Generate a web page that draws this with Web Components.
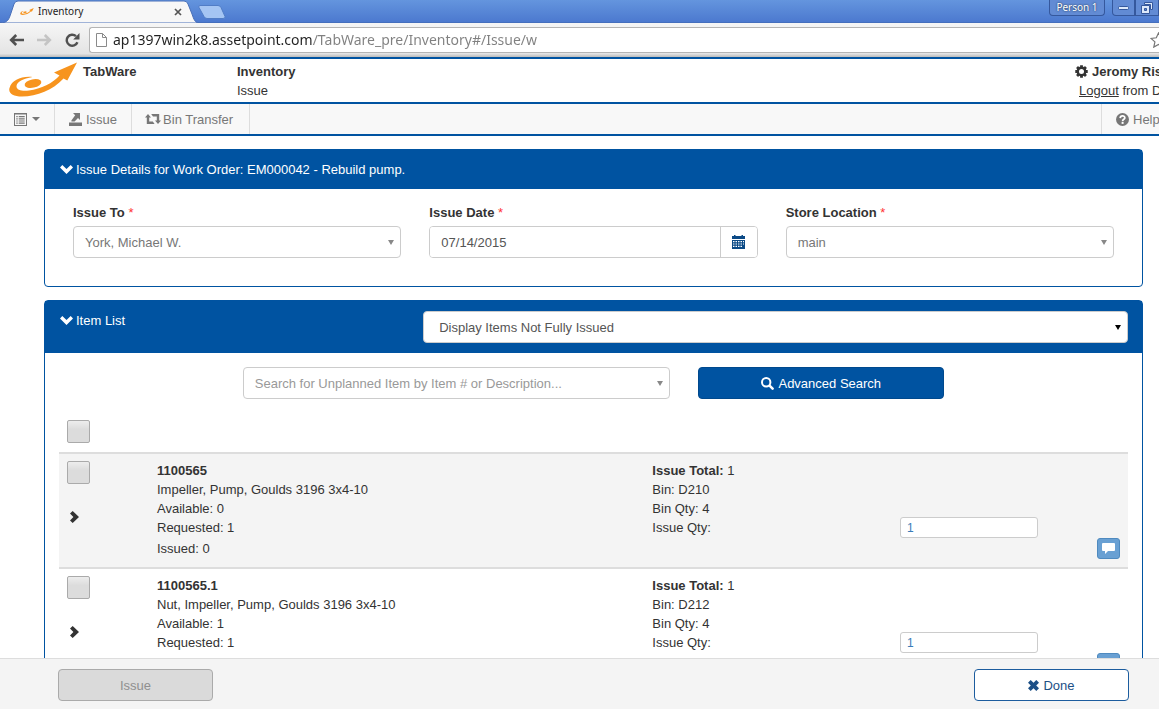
<!DOCTYPE html>
<html lang="en">
<head>
  <meta charset="UTF-8">
  <meta name="viewport" content="width=device-width, initial-scale=1.0">
  <title>Inventory</title>
  <style>
    :root {
      --c-brand: #0053a1;
      --c-border: #ccc;
      --c-text: #333;
      --c-muted: #777;
    }
    body {
      margin: 0;
      background: #fff;
      color: var(--c-text);
      font: 13px/19px "Liberation Sans", Arial, sans-serif;
    }
  </style>
</head>
<body>
  <inventory-app></inventory-app>

  <script>
    const ICONS = {
      'chevron-down': ['0 0 13 9', '<path d="M0 2.4 2.3 0 6.5 4 10.7 0 13 2.4 6.5 9z"/>'],
      'chevron-right': ['0 0 10 12', '<path d="M1 2.6 3.7 0 10 6 3.7 12 1 9.4 4.4 6z"/>'],
      list: ['0 0 13 13', '<path fill-rule="evenodd" d="M0 0h13v13H0zM1 1.500v10.500h11V1.500z"/><path d="M2.3 3h1.4v1.2H2.3zM4.7 3h6v1.2h-6zM2.3 5.2h1.4v1.2H2.3zM4.7 5.2h6v1.2h-6zM2.3 7.4h1.4v1.2H2.3zM4.7 7.4h6v1.2h-6zM2.3 9.6h1.4v1.2H2.3zM4.7 9.6h6v1.2h-6z"/>'],
      issue: ['0 0 13 13', '<path d="M0 9.6h13V13H0zM4 0h7v7L9 5 5.600 8.600H2.400V7.400L6.200 2.200z"/>'],
      transfer: ['0 0 16 10', '<path d="M3 0 6 3.6H4.200v4h3.600L9.600 10H1.8V3.6H0zM6.200 0h8v6.4H16L13 10 10 6.4h1.800v-4H8z"/>'],
      help: ['0 0 13 13', '<circle cx="6.5" cy="6.5" r="6.5"/><path fill="none" stroke="#fff" stroke-width="1.8" d="M4.2 5.1c.1-3 4.7-2.9 4.6-.2C8.8 6.4 6.6 6.3 6.6 8.2"/><path fill="#fff" d="M5.6 9h2v1.9h-2z"/>'],
      gear: ['0 0 14 14', '<circle cx="7" cy="7" r="4" fill="none" stroke="currentColor" stroke-width="2.600"/><path stroke="currentColor" stroke-width="3" d="M7 .3v2.400M7 11.3v2.400M.3 7h2.400M11.3 7h2.400M2.2 2.2 4 4M10 10l1.800 1.800M2.2 11.800 4 10M10 4l1.800-1.800"/>'],
      calendar: ['0 0 13 14', '<path d="M2 0h1.5v1h6V0H11v1h2v3H0V1h2z"/><path fill-rule="evenodd" d="M0 5h13v9H0zM1 6v1.2h1.5V6zm2.5 0v1.2H5V6zM6 6v1.2h1.5V6zm2.5 0v1.2H10V6zM11 6v1.2h1V6zM1 8.4v1.2h1.5V8.4zm2.5 0v1.2H5V8.4zm2.5 0v1.2h1.5V8.4zm2.5 0v1.2H10V8.4zm2.5 0v1.2h1V8.4zM1 10.8V12h1.5v-1.2zm2.5 0V12H5v-1.2zm2.5 0V12h1.5v-1.2zm2.5 0V12H10v-1.2z"/>'],
      search: ['0 0 13 13', '<circle cx="5.2" cy="5.2" r="4.2" fill="none" stroke="currentColor" stroke-width="2"/><path stroke="currentColor" stroke-width="2.6" stroke-linecap="round" d="m8.8 8.8 2.8 2.8"/>'],
      comment: ['0 0 13 11', '<path d="M1 0h11q1 0 1 1v6q0 1-1 1H6l-3 3V8H1Q0 8 0 7V1q0-1 1-1z"/>'],
      times: ['0 0 11 11', '<path d="M2.7 0 5.5 2.8 8.3 0 11 2.7 8.2 5.5 11 8.3 8.3 11 5.5 8.2 2.7 11 0 8.3 2.8 5.5 0 2.7z"/>'],
      close: ['0 0 8 8', '<path stroke="currentColor" stroke-width="1.7" d="m1 1 6 6M7 1 1 7"/>'],
      back: ['0 0 15 12', '<path fill="none" stroke="currentColor" stroke-width="2.6" d="M15 6H2.5M7.2 1 2.2 6l5 5"/>'],
      forward: ['0 0 15 12', '<path fill="none" stroke="currentColor" stroke-width="2.6" d="M0 6h12.5M7.8 1l5 5-5 5"/>'],
      reload: ['0 0 15 14', '<path fill="none" stroke="currentColor" stroke-width="2.4" d="M12.4 9.2A5.5 5.5 0 1 1 11 3.2"/><path d="M14.5 0v6.4H8.2z"/>'],
      page: ['0 0 11 14', '<path fill="#fff" stroke="#8a8a8a" d="M.5.5h6l4 4v9H.5zM6.5.5v4h4"/>'],
      star: ['0 0 17 16', '<path fill="#fff" stroke="#777" stroke-width="1.2" d="m8.5 1 2.2 4.8 5.3.6-3.9 3.5 1.1 5.2-4.7-2.6-4.7 2.6 1.1-5.2L1 6.4l5.3-.6z"/>'],
      logo: ['0 0 68 35', '<path fill="#f7941e" d="M68 .5 58.3 18.600 54.500 16.500C44 28 28 34.500 13 34.500 4 34.500-1 31 .5 26 3 18 12 14 23.500 15 14 16.500 8 20 7.500 24c-.3 4.500 6.500 5.500 12.500 4.500 12-1.500 24-7.500 30.500-15L45 10.600z"/><ellipse fill="#f7941e" cx="24" cy="21.500" rx="8.500" ry="4.200" transform="rotate(-12 24 21.500)"/>']
    };

    class UiIcon extends HTMLElement {
      constructor() {
        super();
        this.attachShadow({ mode: 'open' });
      }

      connectedCallback() {
        const [box, shape] = ICONS[this.getAttribute('name')];
        const [, , w, h] = box.split(' ');
        const width = this.getAttribute('width') || w;
        this.shadowRoot.innerHTML = `
          <style>
            :host { display: inline-block; flex: none; line-height: 0; }
            svg { display: block; fill: currentColor; }
          </style>
          <svg viewBox="${box}" width="${width}" height="${Math.round(h * width / w)}" aria-hidden="true">${shape}</svg>
        `;
      }
    }
    customElements.define('ui-icon', UiIcon);

    class BrowserBar extends HTMLElement {
      constructor() {
        super();
        this.attachShadow({ mode: 'open' });
      }

      connectedCallback() {
        this.shadowRoot.innerHTML = `
          <style>
            :host { display: block; overflow: hidden; font-family: "Noto Sans", sans-serif; }
            * { box-sizing: border-box; }
            button { font: inherit; color: inherit; padding: 0; margin: 0; border: 0; background: none; display: flex; align-items: center; justify-content: center; }
            .strip {
              display: flex;
              align-items: flex-start;
              height: 23px;
              background: linear-gradient(#6495de, #4c79cf);
              border-bottom: 1px solid #456fbd;
            }
            .tab { position: relative; width: 198px; height: 23px; flex: none; }
            .shape { position: absolute; left: 0; top: 0; }
            .tab-row { position: relative; display: flex; align-items: center; height: 23px; padding: 0 16px 0 20px; font-size: 10px; color: #222; }
            .tab-row span { flex: 1; padding-left: 4px; }
            .tab-row button { color: #555; }
            .new-tab { margin-top: 5px; }
            .window { display: flex; margin-left: auto; color: #fff; }
            .window button { height: 16px; border: 1px solid #35589d; border-top: 0; background: #628bd4; }
            .window .person { width: 56px; margin-right: 7px; border-radius: 0 0 4px 4px; font-size: 10px; text-shadow: 0 0 2px #123; }
            .min { width: 23px; border-radius: 0 0 0 4px; }
            .max { width: 24px; }
            .tools {
              display: flex;
              align-items: center;
              height: 34px;
              padding: 0 0 0 9px;
              background: linear-gradient(#f6f6f6, #e4e4e4 90%, #bbb);
              color: #505050;
            }
            .tools > button { width: 28px; justify-content: flex-start; }
            .tools > button:nth-child(2) { color: #c4c4c4; }
            .tools > button:nth-child(3) { width: 24px; }
            .address {
              display: flex;
              align-items: center;
              flex: 1;
              height: 26px;
              min-width: 0;
              padding: 0 0 0 6px;
              overflow: hidden;
              border: 1px solid #b4b4b4;
              border-right: 0;
              border-radius: 3px 0 0 3px;
              background: #fff;
            }
            input {
              flex: 1;
              min-width: 0;
              border: 0;
              padding: 0 0 0 6px;
              outline: 0;
              font: 14px/22px "Noto Sans", sans-serif;
              color: #808080;
              /* host part dark, path part grey */
              background: linear-gradient(90deg, #222 206px, #808080 206px);
              -webkit-background-clip: text;
              background-clip: text;
              -webkit-text-fill-color: transparent;
            }
            .star { width: 9px; overflow: hidden; justify-content: flex-start; }
          </style>
          <div class="strip">
            <div class="tab">
              <svg class="shape" width="198" height="23" viewBox="0 0 198 23" aria-hidden="true">
                <path d="M0 23C8 23 9 19 11 13L14 4q1-3 4-3h166q3 0 4 3l4 10c2 6 3 8 6 9z" fill="#f7f7f7" stroke="#486fb8"/>
              </svg>
              <div class="tab-row">
                <ui-icon name="logo" width="14"></ui-icon>
                <span>Inventory</span>
                <button aria-label="Close tab"><ui-icon name="close"></ui-icon></button>
              </div>
            </div>
            <button class="new-tab" aria-label="New tab">
              <svg width="28" height="14" viewBox="0 0 28 14"><path d="M2 .5h18q2 0 3 2l4 9q.5 2-2 2H9q-2 0-3-2L1 2.5Q0 .5 2 .5z" fill="#a5c5f3" stroke="#517dc6"/></svg>
            </button>
            <div class="window">
              <button class="person">Person 1</button>
              <button class="min" aria-label="Minimize"><svg width="11" height="4"><rect x=".5" y=".5" width="10" height="3" rx="1" fill="#dce8fa" stroke="#35589d"/></svg></button>
              <button class="max" aria-label="Restore"><svg width="12" height="12"><path d="M3.5.5h8v7h-2v-5h-6z" fill="#dce8fa" stroke="#35589d"/><path d="M.5 3.5h8v8h-8zM3.5 6.5v2h2v-2z" fill-rule="evenodd" fill="#dce8fa" stroke="#35589d"/></svg></button>
            </div>
          </div>
          <div class="tools">
            <button aria-label="Back"><ui-icon name="back"></ui-icon></button>
            <button aria-label="Forward"><ui-icon name="forward"></ui-icon></button>
            <button aria-label="Reload"><ui-icon name="reload"></ui-icon></button>
            <div class="address">
              <ui-icon name="page"></ui-icon>
              <input type="text" aria-label="Address" value="ap1397win2k8.assetpoint.com/TabWare_pre/Inventory#/Issue/w">
              <button class="star" aria-label="Bookmark"><ui-icon name="star"></ui-icon></button>
            </div>
          </div>
        `;
      }
    }
    customElements.define('browser-bar', BrowserBar);

    class AppHeader extends HTMLElement {
      constructor() {
        super();
        this.attachShadow({ mode: 'open' });
      }

      connectedCallback() {
        this.shadowRoot.innerHTML = `
          <style>
            :host { display: block; overflow: hidden; border-top: 2px solid var(--c-brand); }
            .title { display: flex; padding: 3px 0 2px 9px; border-bottom: 2px solid var(--c-brand); }
            .title > div { white-space: nowrap; }
            .brand { width: 154px; padding-left: 6px; }
            .user { box-sizing: border-box; width: 84px; margin-left: auto; padding-left: 4px; overflow: hidden; }
            .name { display: flex; align-items: center; gap: 4px; margin-left: -4px; font-weight: bold; }
            .user a { color: inherit; }
            nav {
              display: flex;
              height: 30px;
              background: #f8f8f8;
              border-bottom: 2px solid var(--c-brand);
            }
            nav a {
              display: flex;
              align-items: center;
              gap: 4px;
              padding: 0 14px;
              border-right: 1px solid #ddd;
              color: var(--c-muted);
              text-decoration: none;
              white-space: nowrap;
            }
            nav a.transfer { gap: 2px; padding: 0 16px 0 13px; }
            nav a.help { width: 58px; box-sizing: border-box; margin-left: auto; padding-right: 0; border-right: 0; border-left: 1px solid #ddd; }
            .caret { margin-left: 1px; border: 4px solid transparent; border-top-color: currentColor; border-bottom: 0; }
          </style>
          <div class="title">
            <ui-icon name="logo"></ui-icon>
            <div class="brand"><b>TabWare</b></div>
            <div><b>Inventory</b><br>Issue</div>
            <div class="user">
              <div class="name"><ui-icon name="gear" width="13"></ui-icon>Jeromy Ris</div>
              <a href="#">Logout</a> from D
            </div>
          </div>
          <nav>
            <a href="#" aria-label="Menu"><ui-icon name="list"></ui-icon><span class="caret"></span></a>
            <a href="#"><ui-icon name="issue"></ui-icon>Issue</a>
            <a href="#" class="transfer"><ui-icon name="transfer"></ui-icon>Bin Transfer</a>
            <a href="#" class="help"><ui-icon name="help"></ui-icon>Help</a>
          </nav>
        `;
      }
    }
    customElements.define('app-header', AppHeader);

    class PanelCard extends HTMLElement {
      constructor() {
        super();
        this.attachShadow({ mode: 'open' });
      }

      connectedCallback() {
        this.shadowRoot.innerHTML = `
          <style>
            :host { display: block; border: 1px solid var(--c-brand); border-radius: 4px; background: #fff; }
            header { display: flex; justify-content: space-between; padding: 10px 14px 10px 15px; background: var(--c-brand); color: #fff; }
            h2 { display: flex; align-items: center; gap: 3px; height: 19px; margin: 0; font: inherit; }
            ::slotted([slot="tools"]) { flex: 0 0 66%; }
          </style>
          <header>
            <h2><ui-icon name="chevron-down"></ui-icon>${this.getAttribute('heading')}</h2>
            <slot name="tools"></slot>
          </header>
          <slot></slot>
        `;
      }
    }
    customElements.define('panel-card', PanelCard);

    // Label + select, the arrow is drawn over the right edge
    class SelectField extends HTMLElement {
      constructor() {
        super();
        this.attachShadow({ mode: 'open' });
      }

      connectedCallback() {
        const label = this.getAttribute('label');
        const hidden = this.hasAttribute('hide-label');
        this.shadowRoot.innerHTML = `
          <style>
            :host { display: block; --c-value: var(--c-muted); --c-arrow: #888; --indent: 11px; }
            :host([placeholder]) { --c-value: #999; }
            :host([native]) { --c-value: #555; --c-arrow: #000; --indent: 15px; }
            label { display: block; margin-bottom: 4px; font-weight: bold; }
            i { color: #f33; font-style: normal; font-weight: normal; }
            .box { position: relative; }
            .box::after {
              content: '';
              position: absolute;
              right: 7px;
              top: 14px;
              border: 3px solid transparent;
              border-top: 5px solid var(--c-arrow);
              border-bottom: 0;
              pointer-events: none;
            }
            select {
              appearance: none;
              display: block;
              width: 100%;
              height: 32px;
              padding: 0 24px 0 var(--indent);
              border: 1px solid var(--c-border);
              border-radius: 4px;
              background: #fff;
              color: var(--c-value);
              font: inherit;
            }
          </style>
          ${hidden ? '' : `<label for="field">${label} <i>*</i></label>`}
          <div class="box">
            <select id="field" aria-label="${label}"><option>${this.getAttribute('value')}</option></select>
          </div>
        `;
      }
    }
    customElements.define('select-field', SelectField);

    class DateField extends HTMLElement {
      constructor() {
        super();
        this.attachShadow({ mode: 'open' });
      }

      connectedCallback() {
        this.shadowRoot.innerHTML = `
          <style>
            :host { display: block; }
            label { display: block; margin-bottom: 4px; font-weight: bold; }
            i { color: #f33; font-style: normal; font-weight: normal; }
            .group { display: flex; box-sizing: border-box; height: 32px; border: 1px solid var(--c-border); border-radius: 4px; overflow: hidden; }
            input { flex: 1; min-width: 0; padding: 0 11px; border: 0; background: #fff; color: #555; font: inherit; }
            button { display: flex; align-items: center; justify-content: center; width: 37px; padding: 0; border: 0; border-left: 1px solid var(--c-border); background: #fff; color: #0b4a86; }
          </style>
          <label for="date">${this.getAttribute('label')} <i>*</i></label>
          <div class="group">
            <input id="date" type="text" value="${this.getAttribute('value')}">
            <button aria-label="Pick a date"><ui-icon name="calendar"></ui-icon></button>
          </div>
        `;
      }
    }
    customElements.define('date-field', DateField);

    class UiButton extends HTMLElement {
      constructor() {
        super();
        this.attachShadow({ mode: 'open' });
      }

      connectedCallback() {
        const off = this.hasAttribute('disabled') ? 'disabled' : '';
        this.shadowRoot.innerHTML = `
          <style>
            :host { display: block; }
            button {
              display: flex;
              align-items: center;
              justify-content: center;
              gap: 4px;
              width: 100%;
              height: 32px;
              padding: 0;
              border: 1px solid #00498d;
              border-radius: 4px;
              background: var(--c-brand);
              color: #fff;
              font: inherit;
            }
            :host([outline]) button { background: #fff; border-color: #1c5c9e; color: #1c4f86; }
            button:disabled { background: #dadada; border-color: #aaa; color: #8f8f8f; }
          </style>
          <button ${off}><slot></slot></button>
        `;
      }
    }
    customElements.define('ui-button', UiButton);

    class TickBox extends HTMLElement {
      constructor() {
        super();
        this.attachShadow({ mode: 'open' });
      }

      connectedCallback() {
        this.shadowRoot.innerHTML = `
          <style>
            :host { display: block; }
            input {
              appearance: none;
              display: block;
              width: 23px;
              height: 23px;
              margin: 0;
              border: 1px solid #aaa;
              border-radius: 2px;
              background: linear-gradient(#ededed, #dcdcdc 40%);
            }
          </style>
          <input type="checkbox" aria-label="${this.getAttribute('label')}">
        `;
      }
    }
    customElements.define('tick-box', TickBox);

    class ItemRow extends HTMLElement {
      constructor() {
        super();
        this.attachShadow({ mode: 'open' });
      }

      connectedCallback() {
        const d = this.dataset;
        this.shadowRoot.innerHTML = `
          <style>
            :host { display: block; padding: 7px 8px 8px; border-top: 2px solid #ddd; }
            :host(:nth-of-type(odd)) { background: #f4f4f4; }
            .grid {
              display: grid;
              grid-template-columns: 90px 2fr 1fr 220px;
              grid-template-rows: repeat(4, 19px) 22px;
              align-items: center;
            }
            .grid > * { grid-column: 2; }
            .grid > .select { grid-area: 1 / 1 / 6 / 2; align-self: start; }
            .expand { display: block; margin: 27px 0 0 2px; padding: 0; border: 0; background: none; color: var(--c-text); }
            .grid > .bin { grid-column: 3; }
            .grid > .qty { grid-area: 4 / 4; }
            .qty input {
              box-sizing: border-box;
              display: block;
              width: 138px;
              height: 21px;
              padding: 0 6px;
              border: 1px solid var(--c-border);
              border-radius: 3px;
              background: #fff;
              color: #3a7cb8;
              font: 12px/19px "Liberation Sans", Arial, sans-serif;
            }
            .grid > .note {
              grid-area: 5 / 4;
              align-self: end;
              justify-self: end;
              display: flex;
              align-items: center;
              justify-content: center;
              width: 23px;
              height: 21px;
              padding: 0;
              border: 1px solid #4f8abf;
              border-radius: 3px;
              background: #69a0d3;
              color: #fff;
            }
          </style>
          <div class="grid">
            <div class="select">
              <tick-box label="Select ${d.item}"></tick-box>
              <button class="expand" aria-label="Expand ${d.item}"><ui-icon name="chevron-right"></ui-icon></button>
            </div>
            <b style="grid-row: 1">${d.item}</b>
            <span style="grid-row: 2">${d.name}</span>
            <span style="grid-row: 3">Available: ${d.available}</span>
            <span style="grid-row: 4">Requested: ${d.requested}</span>
            <span style="grid-row: 5">Issued: ${d.issued}</span>
            <span class="bin" style="grid-row: 1"><b>Issue Total:</b> 1</span>
            <span class="bin" style="grid-row: 2">Bin: ${d.bin}</span>
            <span class="bin" style="grid-row: 3">Bin Qty: 4</span>
            <label class="bin" style="grid-row: 4" for="qty">Issue Qty:</label>
            <div class="qty"><input id="qty" type="text" value="1"></div>
            <button class="note" aria-label="Comment"><ui-icon name="comment"></ui-icon></button>
          </div>
        `;
      }
    }
    customElements.define('item-row', ItemRow);

    class InventoryApp extends HTMLElement {
      constructor() {
        super();
        this.attachShadow({ mode: 'open' });
      }

      connectedCallback() {
        this.shadowRoot.innerHTML = `
          <style>
            :host { display: flex; flex-direction: column; height: 100vh; overflow: hidden; }
            browser-bar, app-header, footer { flex: none; }
            main {
              flex: 1;
              min-height: 0;
              display: flex;
              flex-direction: column;
              gap: 13px;
              padding: 13px 16px 0 44px;
              overflow: hidden;
            }
            panel-card { flex: none; }
            .fields { display: grid; grid-template-columns: repeat(3, 1fr); gap: 28px; padding: 14px 28px 28px; }
            .items { padding: 14px; }
            .search { display: flex; justify-content: center; gap: 28px; }
            .search select-field { flex: 0 0 40%; }
            .search ui-button { flex: 0 0 23%; }
            .all { padding: 21px 8px 9px; }
            footer {
              display: flex;
              justify-content: space-between;
              padding: 10px 30px 8px 58px;
              border-top: 1px solid #ddd;
              background: #f4f4f4;
            }
            footer ui-button { width: 155px; }
          </style>
          <browser-bar></browser-bar>
          <app-header></app-header>
          <main>
            <panel-card heading="Issue Details for Work Order: EM000042 - Rebuild pump.">
              <div class="fields">
                <select-field label="Issue To" value="York, Michael W."></select-field>
                <date-field label="Issue Date" value="07/14/2015"></date-field>
                <select-field label="Store Location" value="main"></select-field>
              </div>
            </panel-card>
            <panel-card heading="Item List">
              <select-field slot="tools" native hide-label label="Filter items" value="Display Items Not Fully Issued"></select-field>
              <div class="items">
                <div class="search">
                  <select-field placeholder hide-label label="Search items" value="Search for Unplanned Item by Item # or Description..."></select-field>
                  <ui-button><ui-icon name="search"></ui-icon>Advanced Search</ui-button>
                </div>
                <div class="all"><tick-box label="Select all"></tick-box></div>
                <item-row data-item="1100565" data-name="Impeller, Pump, Goulds 3196 3x4-10" data-available="0" data-requested="1" data-issued="0" data-bin="D210"></item-row>
                <item-row data-item="1100565.1" data-name="Nut, Impeller, Pump, Goulds 3196 3x4-10" data-available="1" data-requested="1" data-issued="0" data-bin="D212"></item-row>
              </div>
            </panel-card>
          </main>
          <footer>
            <ui-button disabled>Issue</ui-button>
            <ui-button outline><ui-icon name="times"></ui-icon>Done</ui-button>
          </footer>
        `;
      }
    }
    customElements.define('inventory-app', InventoryApp);
  </script>
</body>
</html>
